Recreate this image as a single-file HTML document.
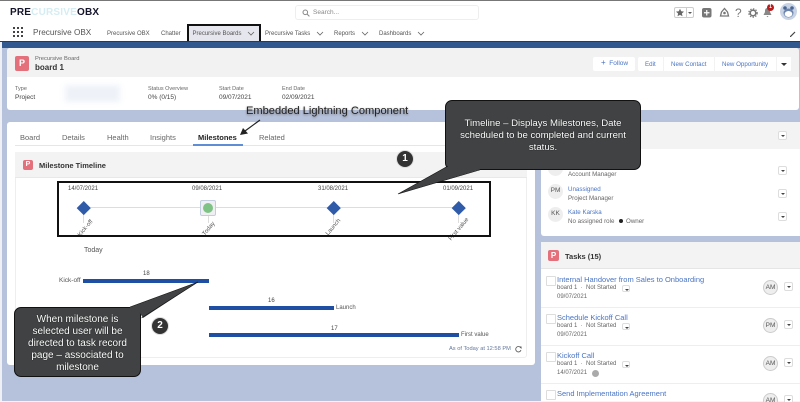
<!DOCTYPE html>
<html><head><meta charset="utf-8"><style>
html,body{margin:0;padding:0}
body{width:800px;height:402px;overflow:hidden;position:relative;background:#b6c2dc;font-family:"Liberation Sans",sans-serif;color:#444}
#w{position:absolute;left:0;top:0;width:800px;height:402px;overflow:hidden;filter:blur(.35px)}
.a{position:absolute;white-space:nowrap;line-height:1.2}
.b{position:absolute;box-sizing:border-box}
.l{color:#4a75c4}
.g{color:#666}
.dd{position:absolute;width:9px;height:9px;background:#fff;border:1px solid #ddd;border-radius:2px;box-sizing:border-box}
.dd:after{content:"";position:absolute;left:2px;top:3px;border:2px solid transparent;border-top:2px solid #444;border-bottom:0}
.av{position:absolute;width:15px;height:15px;border-radius:50%;background:#eee;border:1px solid #ccc;box-sizing:border-box;font-size:6.5px;text-align:center;line-height:13px;color:#555}
.cb{position:absolute;width:8px;height:8px;border:1px solid #ddd;background:#fff;border-radius:1px}
.d{position:absolute;width:9.5px;height:9.5px;background:#2f5ba8;transform:rotate(45deg)}
.rot{position:absolute;font-size:6px;color:#555;transform:rotate(-50deg);transform-origin:right top;white-space:nowrap}
.bar{position:absolute;height:4px;background:#1f4fa3}
.tab{position:absolute;top:133px;font-size:7.5px;color:#666;white-space:nowrap}
.nav{position:absolute;top:31px;font-size:6px;color:#555;white-space:nowrap}
.call{position:absolute;background:#404243;border:1px solid #111;border-radius:7px;box-sizing:border-box;color:#fff;text-align:center;line-height:12.2px;text-shadow:0 0 1px #000}
.num{position:absolute;width:16px;height:16px;border-radius:50%;background:#333;color:#fff;font-size:10px;font-weight:bold;text-align:center;line-height:16px;box-shadow:0 0 0 1px #ddd}
</style></head><body><div id="w">

<!-- global header -->
<div class="b" style="left:0;top:0;width:800px;height:42px;background:#fff;border-top:1px solid #777"></div>
<div class="a" style="left:10px;top:6.500px;font-size:10px;font-weight:bold;letter-spacing:.2px;color:#14142b">PRE<span style="color:#d5edf2">CURSIVE</span>OBX</div>
<div class="b" style="left:295px;top:5px;width:184px;height:15px;border:1px solid #eee;border-radius:3px;background:#fff"></div>
<svg class="b" style="left:302px;top:9px" width="8" height="8" viewBox="0 0 8 8"><circle cx="3.3" cy="3.3" r="2.3" fill="none" stroke="#888"/><path d="M5 5l2.4 2.4" stroke="#888"/></svg>
<div class="a g" style="left:313px;top:9px;font-size:6.500px;color:#888">Search...</div>
<!-- right icons -->
<div class="b" style="left:674px;top:7px;width:20px;height:11px;border:1px solid #ccc;border-radius:2px;background:#fff"></div>
<div class="b" style="left:686px;top:7px;width:1px;height:11px;background:#ccc"></div>
<svg class="b" style="left:675px;top:8px" width="10" height="9" viewBox="0 0 10 9"><path d="M5 .7l1.2 2.6 2.8.3-2.1 1.9.6 2.8L5 6.9 2.5 8.3l.6-2.8L1 3.6l2.8-.3z" fill="#666"/></svg>
<div class="b" style="left:688px;top:12px;border:2px solid transparent;border-top:2px solid #555;border-bottom:0"></div>
<svg class="b" style="left:702px;top:8px" width="10" height="10" viewBox="0 0 10 10"><rect width="9.500" height="9.500" rx="2" fill="#777"/><path d="M4.750 2v5.500M2 4.750h5.500" stroke="#fff" stroke-width="1.2"/></svg>
<svg class="b" style="left:719px;top:7px" width="11" height="11" viewBox="0 0 11 11"><path d="M5.500 1.500L8.500 5 9.500 9H1.500l1-4z" fill="none" stroke="#777" stroke-width="1.300"/><circle cx="5.500" cy="6" r="1.300" fill="#777"/></svg>
<div class="a" style="left:735px;top:5.500px;font-size:12px;color:#777">?</div>
<svg class="b" style="left:748px;top:8px" width="10" height="10" viewBox="0 0 10 10"><circle cx="5" cy="5" r="2.800" fill="none" stroke="#777" stroke-width="1.600"/><circle cx="5" cy="5" r="4.200" fill="none" stroke="#777" stroke-width="1.200" stroke-dasharray="1.400 1.400"/></svg>
<svg class="b" style="left:762px;top:7px" width="11" height="11" viewBox="0 0 11 11"><path d="M5.500 1C3 1 3 3 3 5L1.500 8h8L8 5c0-2 0-4-2.500-4zM4.500 9h2l-1 1.300z" fill="#888"/></svg>
<div class="b" style="left:767px;top:4px;width:7px;height:7px;border-radius:50%;background:#b81c1c;color:#fff;font-size:5px;font-weight:bold;text-align:center;line-height:7px">1</div>
<svg class="b" style="left:780px;top:3px" width="17" height="17" viewBox="0 0 17 17"><circle cx="8.500" cy="8.500" r="8.500" fill="#c8d3e5"/><circle cx="5" cy="5" r="1.800" fill="#4a6592"/><circle cx="12" cy="5" r="1.800" fill="#4a6592"/><ellipse cx="8.500" cy="10" rx="5" ry="4.500" fill="#6d86ad"/><ellipse cx="8.500" cy="11" rx="3.800" ry="3" fill="#fff"/></svg>

<!-- nav row -->
<svg class="b" style="left:13px;top:27px" width="10" height="10" viewBox="0 0 10 10" fill="#444"><rect width="2" height="2"/><rect x="4" width="2" height="2"/><rect x="8" width="2" height="2"/><rect y="4" width="2" height="2"/><rect x="4" y="4" width="2" height="2"/><rect x="8" y="4" width="2" height="2"/><rect y="8" width="2" height="2"/><rect x="4" y="8" width="2" height="2"/><rect x="8" y="8" width="2" height="2"/></svg>
<div class="a" style="left:33px;top:27.500px;font-size:8.200px;color:#555">Precursive OBX</div>
<div class="nav" style="left:107px">Precursive OBX</div>
<div class="nav" style="left:161px">Chatter</div>
<div class="b" style="left:187px;top:24px;width:74px;height:19px;background:#e6e6ee;border:2px solid #111"></div>
<div class="nav" style="left:192.500px">Precursive Boards</div>
<div class="nav" style="left:265px">Precursive Tasks</div>
<div class="nav" style="left:334px">Reports</div>
<div class="nav" style="left:379px">Dashboards</div>
<svg class="b" style="left:248px;top:32px;overflow:visible" width="6" height="4"><path d="M0 0l3 3 3-3" fill="none" stroke="#666" stroke-width=".8"/></svg>
<svg class="b" style="left:317px;top:32px;overflow:visible" width="6" height="4"><path d="M0 0l3 3 3-3" fill="none" stroke="#666" stroke-width=".8"/></svg>
<svg class="b" style="left:362px;top:32px;overflow:visible" width="6" height="4"><path d="M0 0l3 3 3-3" fill="none" stroke="#666" stroke-width=".8"/></svg>
<svg class="b" style="left:418px;top:32px;overflow:visible" width="6" height="4"><path d="M0 0l3 3 3-3" fill="none" stroke="#666" stroke-width=".8"/></svg>
<svg class="b" style="left:790px;top:31px" width="6" height="6"><path d="M0 6l5-5" stroke="#444" stroke-width="1.200"/></svg>

<!-- blue band -->
<div class="b" style="left:0;top:41px;width:800px;height:7px;background:#31588f;border-top:1.500px solid #173c7c"></div>
<div class="b" style="left:0;top:42px;width:2px;height:360px;background:#eef0f5"></div>
<div class="b" style="left:0;top:401px;width:800px;height:1px;background:#f4f4f6"></div>

<!-- highlight panel -->
<div class="b" style="left:7px;top:48px;width:792px;height:62px;background:#fff;border-radius:3px"></div>
<div class="b" style="left:7px;top:48px;width:792px;height:29px;background:#f2f2f2;border-radius:3px 3px 0 0"></div>
<div class="b" style="left:15px;top:56px;width:14px;height:15px;background:#e4707c;border-radius:2px;color:#fff;font-weight:bold;font-size:9px;text-align:center;line-height:15px">P</div>
<div class="a g" style="left:35px;top:55.500px;font-size:5.800px">Precursive Board</div>
<div class="a" style="left:35px;top:62.500px;font-size:8px;font-weight:bold;color:#333">board 1</div>
<div class="b" style="left:593px;top:57px;width:42px;height:14px;background:#fff;border-radius:2px"></div>
<div class="a l" style="left:601px;top:60px;font-size:6.500px"><span style="font-size:8px;line-height:6px">+</span>&nbsp; Follow</div>
<div class="b" style="left:638px;top:57px;width:25px;height:14px;background:#fff;border-radius:2px 0 0 2px"></div>
<div class="a l" style="left:645px;top:60.500px;font-size:6.200px">Edit</div>
<div class="b" style="left:664px;top:57px;width:50px;height:14px;background:#fff"></div>
<div class="a l" style="left:671px;top:60.500px;font-size:6.200px">New Contact</div>
<div class="b" style="left:715px;top:57px;width:61px;height:14px;background:#fff"></div>
<div class="a l" style="left:722px;top:60.500px;font-size:6.200px">New Opportunity</div>
<div class="b" style="left:777px;top:57px;width:14px;height:14px;background:#fff"></div>
<div class="b" style="left:781px;top:62.500px;border:3px solid transparent;border-top:3px solid #333;border-bottom:0"></div>

<div class="a g" style="left:15px;top:85.500px;font-size:5.500px">Type</div>
<div class="a" style="left:15px;top:93.500px;font-size:6.500px">Project</div>
<div class="b" style="left:65px;top:85px;width:55px;height:17px;background:#eef2f8;filter:blur(3px)"></div>
<div class="a g" style="left:148px;top:85.500px;font-size:5.500px">Status Overview</div>
<div class="a" style="left:148px;top:93.500px;font-size:6.500px">0% (0/15)</div>
<div class="a g" style="left:219px;top:85.500px;font-size:5.500px">Start Date</div>
<div class="a" style="left:219px;top:93.500px;font-size:6.500px">09/07/2021</div>
<div class="a g" style="left:282px;top:85.500px;font-size:5.500px">End Date</div>
<div class="a" style="left:282px;top:93.500px;font-size:6.500px">02/09/2021</div>

<!-- tabs card -->
<div class="b" style="left:7px;top:122px;width:528px;height:243px;background:#fff;border-radius:3px"></div>
<div class="b" style="left:15px;top:145px;width:512px;height:1px;background:#e6e6e6"></div>
<div class="tab" style="left:20px">Board</div>
<div class="tab" style="left:62px">Details</div>
<div class="tab" style="left:107px">Health</div>
<div class="tab" style="left:150px">Insights</div>
<div class="tab" style="left:198px;color:#222;font-weight:bold">Milestones</div>
<div class="tab" style="left:259px">Related</div>
<div class="b" style="left:193px;top:144px;width:50px;height:2px;background:#5f8ed6"></div>

<!-- inner card -->
<div class="b" style="left:15px;top:152px;width:512px;height:206px;background:#fff;border:1px solid #eee;border-radius:3px"></div>
<div class="b" style="left:15px;top:152px;width:512px;height:26px;background:#f3f3f3;border-bottom:1px solid #e8e8e8"></div>
<div class="b" style="left:23px;top:160px;width:10px;height:10px;background:#e4707c;border-radius:2px;color:#fff;font-weight:bold;font-size:7px;text-align:center;line-height:10px">P</div>
<div class="a" style="left:39px;top:160.500px;font-size:7.500px;font-weight:bold;color:#333">Milestone Timeline</div>

<!-- timeline -->
<div class="b" style="left:83px;top:207px;width:376px;height:1px;background:#ddd"></div>
<div class="b" style="left:83px;top:208px;width:1px;height:15px;background:#ddd"></div>
<div class="b" style="left:208px;top:208px;width:1px;height:15px;background:#ddd"></div>
<div class="b" style="left:333px;top:208px;width:1px;height:15px;background:#ddd"></div>
<div class="b" style="left:458px;top:208px;width:1px;height:15px;background:#ddd"></div>
<div class="a" style="left:68px;top:185.500px;font-size:6px">14/07/2021</div>
<div class="a" style="left:192px;top:185.500px;font-size:6px">09/08/2021</div>
<div class="a" style="left:318px;top:185.500px;font-size:6px">31/08/2021</div>
<div class="a" style="left:443px;top:185.500px;font-size:6px">01/09/2021</div>
<div class="d" style="left:78.500px;top:202.500px"></div>
<div class="b" style="left:200px;top:200px;width:16px;height:16px;background:#f0f0f4;border:1px solid #c3cde0;border-radius:2px"></div>
<div class="b" style="left:203px;top:203px;width:10px;height:10px;background:#7fc286;border-radius:50%"></div>
<div class="d" style="left:328.500px;top:202.500px"></div>
<div class="d" style="left:453.500px;top:202.500px"></div>
<div class="rot" style="right:710px;top:219px">Kick-off</div>
<div class="rot" style="right:588px;top:221px">Today</div>
<div class="rot" style="right:462px;top:218px">Launch</div>
<div class="rot" style="right:334px;top:217px">First value</div>
<div class="b" style="left:57px;top:181px;width:434px;height:56px;border:2px solid #111"></div>

<!-- gantt -->
<div class="a" style="left:84px;top:247px;font-size:7px;color:#555">Today</div>
<div class="a" style="left:59px;top:277px;font-size:6.500px;color:#555">Kick-off</div>
<div class="bar" style="left:83px;top:279px;width:126px"></div>
<div class="a" style="left:143px;top:271px;font-size:6px">18</div>
<div class="bar" style="left:209px;top:306px;width:125px"></div>
<div class="a" style="left:268px;top:298px;font-size:6px">16</div>
<div class="a" style="left:336px;top:305px;font-size:6px;color:#555">Launch</div>
<div class="bar" style="left:209px;top:333px;width:250px"></div>
<div class="a" style="left:331px;top:325.500px;font-size:6px">17</div>
<div class="a" style="left:461px;top:332px;font-size:6px;color:#555">First value</div>
<div class="a" style="left:449px;top:346px;font-size:5.700px;color:#65789b">As of Today at 12:58 PM</div>
<svg class="b" style="left:515px;top:346px" width="7" height="7" viewBox="0 0 7 7"><path d="M5.500 1.500A2.700 2.700 0 1 0 6 4" fill="none" stroke="#555" stroke-width=".8"/><path d="M4 .5h2.500V3z" fill="#555"/></svg>

<!-- right cards -->
<div class="b" style="left:541px;top:122px;width:259px;height:114px;background:#fff;border-radius:3px 0 0 3px"></div>
<div class="b" style="left:541px;top:122px;width:259px;height:27px;background:#f3f3f3"></div>
<div class="dd" style="left:778px;top:131px"></div>
<div class="av" style="left:548px;top:161px;border:0"></div>
<div class="a g" style="left:568px;top:171px;font-size:6.200px">Account Manager</div>
<div class="dd" style="left:778px;top:166px"></div>
<div class="av" style="left:548px;top:184px;border:0">PM</div>
<div class="a l" style="left:568px;top:185.500px;font-size:6.200px">Unassigned</div>
<div class="a g" style="left:568px;top:194.500px;font-size:6.200px">Project Manager</div>
<div class="dd" style="left:778px;top:189px"></div>
<div class="av" style="left:548px;top:207px;border:0">KK</div>
<div class="a l" style="left:568px;top:208.500px;font-size:6.200px">Kate Karska</div>
<div class="a g" style="left:568px;top:217.500px;font-size:6.200px">No assigned role</div>
<div class="b" style="left:619px;top:219px;width:4px;height:4px;border-radius:50%;background:#222"></div>
<div class="a g" style="left:626px;top:217.500px;font-size:6.200px">Owner</div>
<div class="dd" style="left:778px;top:212px"></div>

<div class="b" style="left:541px;top:242px;width:259px;height:159px;background:#fff;border-radius:3px 0 0 0"></div>
<div class="b" style="left:541px;top:242px;width:259px;height:27px;background:#f3f3f3;border-bottom:1px solid #e5e5e5"></div>
<div class="b" style="left:548px;top:250px;width:11px;height:11px;background:#e4707c;border-radius:2px;color:#fff;font-weight:bold;font-size:8px;text-align:center;line-height:11px">P</div>
<div class="a" style="left:565px;top:251.500px;font-size:7.500px;font-weight:bold;color:#333">Tasks (15)</div>

<div class="cb" style="left:546px;top:276px"></div>
<div class="a l" style="left:557px;top:274.500px;font-size:7.500px">Internal Handover from Sales to Onboarding</div>
<div class="a g" style="left:557px;top:284.500px;font-size:6px">board 1 &nbsp;·&nbsp; Not Started</div>
<div class="dd" style="left:622px;top:285px;width:7.500px;height:7px"></div>
<div class="a g" style="left:557px;top:293.500px;font-size:6px">09/07/2021</div>
<div class="av" style="left:763px;top:279.500px">AM</div>
<div class="dd" style="left:784px;top:281.500px"></div>
<div class="b" style="left:541px;top:307px;width:259px;height:1px;background:#eee"></div>

<div class="cb" style="left:546px;top:314px"></div>
<div class="a l" style="left:557px;top:312.500px;font-size:7.500px">Schedule Kickoff Call</div>
<div class="a g" style="left:557px;top:322.500px;font-size:6px">board 1 &nbsp;·&nbsp; Not Started</div>
<div class="dd" style="left:622px;top:323px;width:7.500px;height:7px"></div>
<div class="a g" style="left:557px;top:331.500px;font-size:6px">09/07/2021</div>
<div class="av" style="left:763px;top:317.500px">PM</div>
<div class="dd" style="left:784px;top:319.500px"></div>
<div class="b" style="left:541px;top:345px;width:259px;height:1px;background:#eee"></div>

<div class="cb" style="left:546px;top:352px"></div>
<div class="a l" style="left:557px;top:350.500px;font-size:7.500px">Kickoff Call</div>
<div class="a g" style="left:557px;top:360.500px;font-size:6px">board 1 &nbsp;·&nbsp; Not Started</div>
<div class="dd" style="left:622px;top:361px;width:7.500px;height:7px"></div>
<div class="a g" style="left:557px;top:369.500px;font-size:6px">14/07/2021</div>
<div class="b" style="left:592px;top:370px;width:7px;height:7px;border-radius:50%;background:#aaa"></div>
<div class="av" style="left:763px;top:355.500px">AM</div>
<div class="dd" style="left:784px;top:357.500px"></div>
<div class="b" style="left:541px;top:383px;width:259px;height:1px;background:#eee"></div>

<div class="cb" style="left:546px;top:390px"></div>
<div class="a l" style="left:557px;top:388.500px;font-size:7.500px">Send Implementation Agreement</div>
<div class="av" style="left:763px;top:393px">AM</div>
<div class="dd" style="left:784px;top:395px"></div>

<!-- annotations -->
<div class="a" style="left:246px;top:104.500px;font-size:11.100px;color:#222;text-shadow:0 1px 2px #777">Embedded Lightning Component</div>
<svg class="b" style="left:235px;top:115px" width="30" height="25" viewBox="0 0 30 25"><path d="M25 5L10 16" stroke="#222" stroke-width="1.200"/><path d="M5 20l3-7 5 5.500z" fill="#222"/></svg>

<div class="call" style="left:445px;top:100px;width:196px;height:70px;padding:16.500px 2px 0;font-size:9.600px">Timeline – Displays Milestones, Date<br>scheduled to be completed and current<br>status.</div>
<svg class="b" style="left:390px;top:160px" width="100" height="40" viewBox="0 0 100 40"><path d="M8 34L58 6V4H90V9.500z" fill="#404243"/><path d="M58 6L8 34 90 9.800" fill="none" stroke="#111" stroke-width=".6"/></svg>
<div class="call" style="left:14px;top:307px;width:127px;height:70px;padding:5.500px 0 0;font-size:10px">When milestone is<br>selected user will be<br>directed to task record<br>page – associated to<br>milestone</div>
<svg class="b" style="left:120px;top:275px" width="85" height="50" viewBox="0 0 85 50"><path d="M78 7L10 32V35H18L23 43z" fill="#404243"/><path d="M10 32L78 7 21.500 43" fill="none" stroke="#111" stroke-width=".6"/></svg>
<div class="num" style="left:397px;top:151px">1</div>
<div class="num" style="left:152px;top:318px">2</div>
</div></body></html>
